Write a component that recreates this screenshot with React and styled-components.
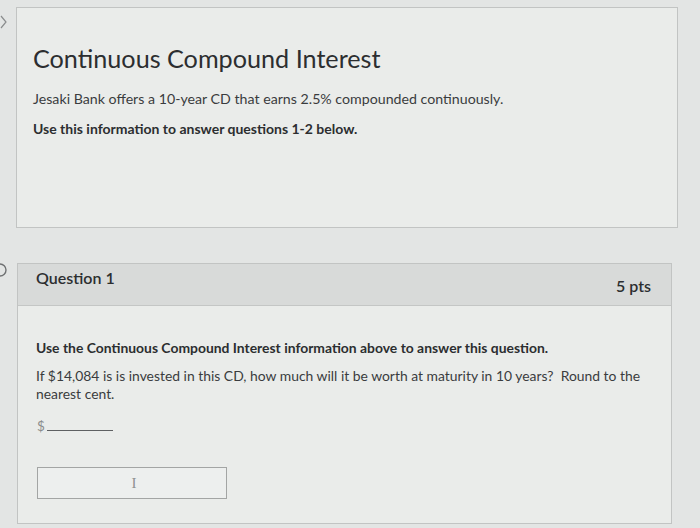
import React from "react";
import styled, { createGlobalStyle } from "styled-components";

const Global = createGlobalStyle`
  html, body { margin: 0; padding: 0; }
  body {
    background: #e3e5e4;
    font-family: Lato, "Open Sans", "Liberation Sans", sans-serif;
    color: #303234;
    width: 700px;
    height: 528px;
    overflow: hidden;
  }
`;

const Page = styled.div`
  position: relative;
  padding: 7px 0 0 16px;
  display: flex;
  flex-direction: column;
  align-items: flex-start;
`;

const Card = styled.section`
  box-sizing: border-box;
  width: ${(p) => p.$w}px;
  margin-left: ${(p) => p.$ml || 0}px;
  background: #eaecea;
  border: 1px solid #c2c4c3;
`;

const InfoCard = styled(Card)`
  height: 221px;
  padding: 35px 16px 0 16px;
`;

const Title = styled.h1`
  margin: 0 0 16px;
  font-size: 25.2px;
  line-height: 30px;
  font-weight: 400;
  color: #2c2e30;
`;

const Text = styled.p`
  margin: 0 0 ${(p) => p.$mb || 0}px;
  font-size: ${(p) => p.$size || 14}px;
  line-height: ${(p) => p.$lh || 20}px;
  font-weight: ${(p) => (p.$bold ? 700 : 400)};
  color: ${(p) => (p.$bold ? "#2c2e30" : "#3a3c3e")};
  max-width: ${(p) => p.$max || "none"};
`;

const Gap = styled.div`
  height: 35px;
`;

const QuestionCard = styled(Card)``;

const Header = styled.header`
  height: 42px;
  box-sizing: border-box;
  background: #d8dad9;
  border-bottom: 1px solid #c4c6c5;
  padding: 0 20px 0 18px;
  display: flex;
  justify-content: space-between;
  align-items: flex-start;
`;

const QTitle = styled.span`
  margin-top: 4px;
  font-size: 16px;
  line-height: 20px;
  font-weight: 600;
  color: #2c2e30;
`;

const Pts = styled.span`
  margin-top: 12px;
  font-size: 16px;
  line-height: 20px;
  font-weight: 600;
  color: #2c2e30;
`;

const Body = styled.div`
  padding: 32px 20px 24px 18px;
`;

const AnswerRow = styled.div`
  display: flex;
  align-items: flex-end;
  gap: 2px;
  margin-top: 11px;
  height: 20px;
  padding-left: 1px;
`;

const Dollar = styled.span`
  font-size: 13.5px;
  line-height: 16px;
  color: #8a8c8d;
`;

const Blank = styled.span`
  display: block;
  width: 66px;
  height: 0;
  border-bottom: 1px solid #5e6062;
  margin-bottom: 3px;
`;

const InputBox = styled.div`
  margin-top: 33px;
  margin-left: 1px;
  width: 190px;
  height: 32px;
  box-sizing: border-box;
  border: 1px solid #a3a5a4;
  background: #edefee;
  display: flex;
  align-items: center;
  justify-content: center;
`;

const Cursor = styled.span`
  font-family: "Liberation Serif", "DejaVu Serif", serif;
  font-size: 15px;
  color: #8d8f90;
  margin-left: 4px;
`;

const EdgeIcon = styled.svg`
  position: absolute;
  left: 0;
  top: ${(p) => p.$top}px;
`;

export default function App() {
  return (
    <>
      <Global />
      <Page>
        <EdgeIcon $top={14} width="8" height="16" viewBox="0 0 8 16">
          <path d="M1 2 L6 8 L1 14" fill="none" stroke="#8a8c8d" strokeWidth="1.2" />
        </EdgeIcon>
        <EdgeIcon $top={262} width="10" height="16" viewBox="0 0 10 16">
          <path d="M0 2 A6 6 0 0 1 0 14" fill="none" stroke="#6f7172" strokeWidth="1.4" />
        </EdgeIcon>
        <InfoCard $w={662}>
          <Title>Continuous Compound Interest</Title>
          <Text $size={14.2} $mb={10}>
            Jesaki Bank offers a 10-year CD that earns 2.5% compounded continuously.
          </Text>
          <Text $bold>Use this information to answer questions 1-2 below.</Text>
        </InfoCard>
        <Gap />
        <QuestionCard $w={655} $ml={1}>
          <Header>
            <QTitle>Question 1</QTitle>
            <Pts>5 pts</Pts>
          </Header>
          <Body>
            <Text $bold $size={13.9} $mb={9}>
              Use the Continuous Compound Interest information above to answer this question.
            </Text>
            <Text $size={13.9} $lh={18} $max="612px">
              If $14,084 is is invested in this CD, how much will it be worth at maturity in 10
              years?&nbsp; Round to the nearest cent.
            </Text>
            <AnswerRow>
              <Dollar>$</Dollar>
              <Blank />
            </AnswerRow>
            <InputBox>
              <Cursor>I</Cursor>
            </InputBox>
          </Body>
        </QuestionCard>
      </Page>
    </>
  );
}
